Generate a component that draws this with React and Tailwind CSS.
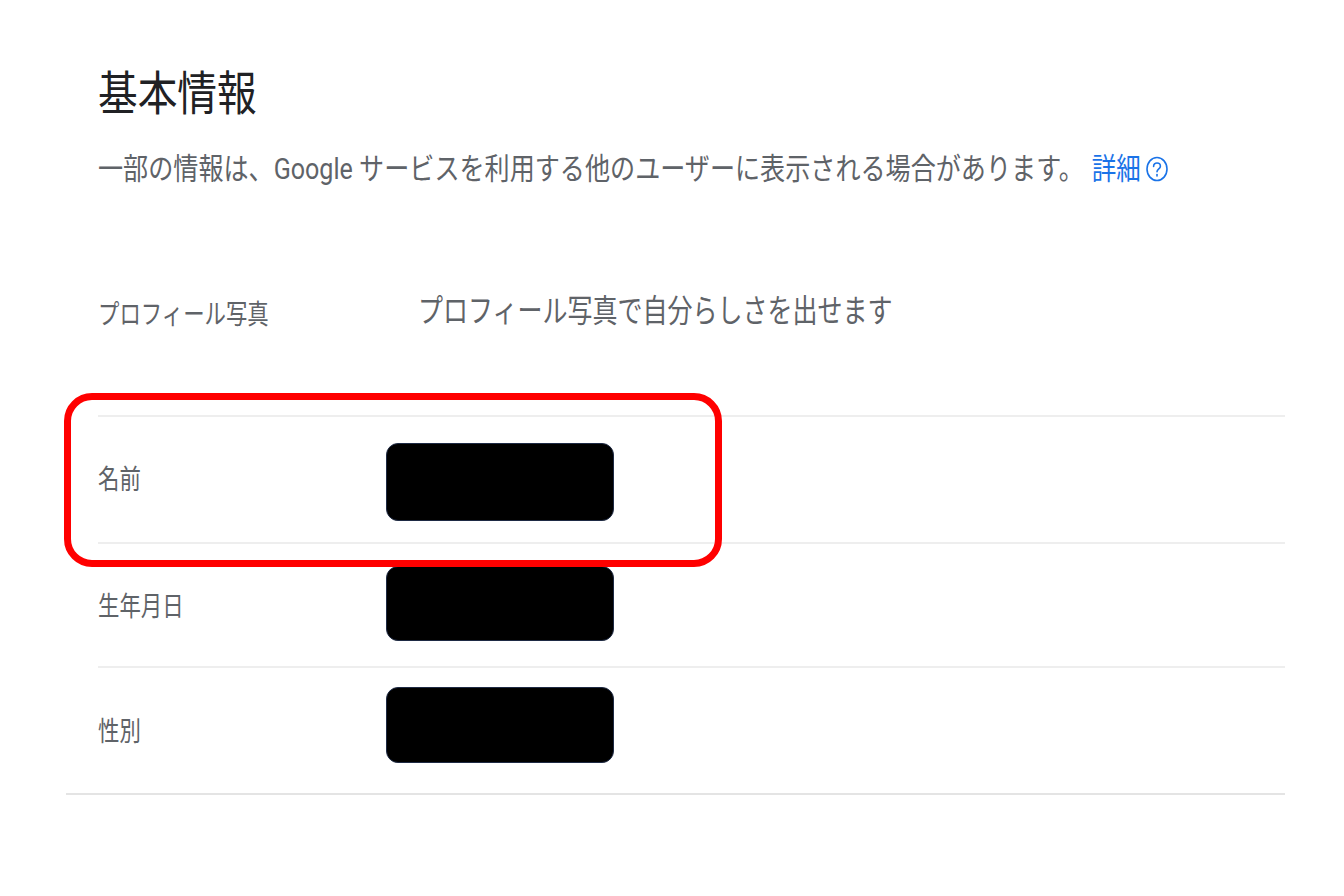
const font = "font-['Roboto','Noto_Sans_CJK_JP','Noto_Sans_CJK_SC',sans-serif]";

function Row({ label, height, boxClass, labelClass }) {
  return (
    <div className={`flex items-center ${height}`}>
      <div className={`w-[288px] shrink-0 origin-left scale-y-[1.3] text-[21.4px] leading-none text-[#5f6368] ${labelClass}`}>{label}</div>
      <div className={`w-[228px] self-start rounded-[12px] border border-[#1e2a44] bg-black ${boxClass}`} />
    </div>
  );
}

export default function App() {
  return (
    <div className={`relative h-[896px] w-[1344px] overflow-hidden bg-white ${font}`}>
      <div className="flex flex-col pt-[68px] pr-[59px] pl-[66px]">
        <div className="pl-[32px]">
          <h1 className="h-[54px] origin-left scale-y-[1.18] text-[39.7px] leading-[54px] font-normal text-[#202124]">基本情報</h1>
          <p className="mt-[31px] flex h-[32px] items-center text-[#5f6368]">
            <span className="origin-left scale-y-[1.2] text-[25.1px] leading-none whitespace-nowrap">一部の情報は、Google サービスを利用する他のユーザーに表示される場合があります。</span>
            <span className="ml-[8px] origin-left scale-y-[1.2] text-[24.5px] leading-none text-[#1a73e8]">詳細</span>
            <svg className="ml-[4px] h-[26px] w-[24px]" viewBox="0 0 24 26" fill="none" stroke="#1a73e8" strokeWidth="1.6">
              <ellipse cx="12" cy="13" rx="10" ry="11.5" />
              <path d="M8.6 10.4c0-2.2 1.4-3.4 3.4-3.4s3.4 1.2 3.4 3.2c0 2.6-3.4 2.7-3.4 5.6" strokeLinecap="round" />
              <path d="M12 18.6v1.4" strokeLinecap="round" />
            </svg>
          </p>
        </div>

        <div className="mt-[112px] ml-[32px] flex h-[118px] items-start">
          <div className="mt-[7px] w-[320px] shrink-0 origin-left scale-y-[1.3] text-[21.4px] leading-none whitespace-nowrap text-[#5f6368]">プロフィール写真</div>
          <div className="mt-[2px] origin-left scale-y-[1.25] text-[25px] leading-none whitespace-nowrap text-[#5f6368]">プロフィール写真で自分らしさを出せます</div>
        </div>

        <div className="ml-[32px] border-t-2 border-[#eeeeee]">
          <Row label="名前" height="h-[125px]" boxClass="mt-[26px] h-[78px]" />
        </div>
        <div className="ml-[32px] border-t-2 border-[#eeeeee]">
          <Row label="生年月日" height="h-[122px]" labelClass="mt-[4px]" boxClass="mt-[22px] h-[75px]" />
        </div>
        <div className="border-b-2 border-[#e4e4e4]">
          <div className="ml-[32px] border-t-2 border-[#eeeeee]">
            <Row label="性別" height="h-[125px]" labelClass="mt-[2px]" boxClass="mt-[19px] h-[76px]" />
          </div>
        </div>
      </div>

      <div className="absolute top-[393px] left-[64px] h-[174px] w-[658px] rounded-[28px] border-[7px] border-[#ff0000]" />
    </div>
  );
}
